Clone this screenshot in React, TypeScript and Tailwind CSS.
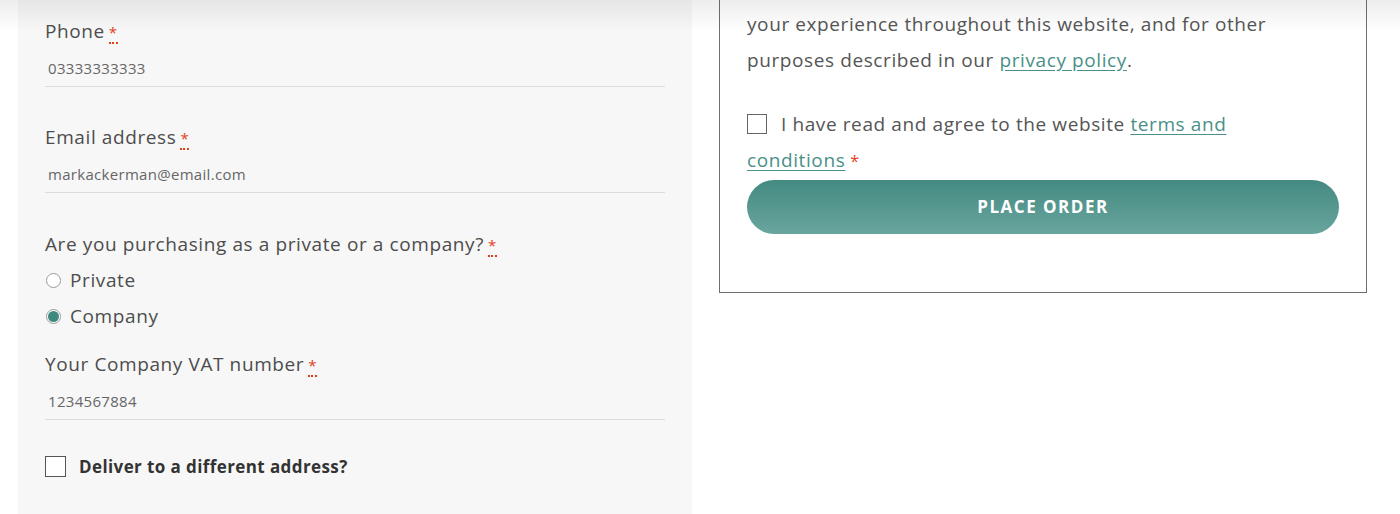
import React from "react";

const font = { fontFamily: '"Open Sans", "Liberation Sans", sans-serif' };

const Req: React.FC = () => (
  <abbr
    title="required"
    className="ml-[4px] text-[15px] text-[#e2401c] no-underline border-b-2 border-dotted border-[#e2401c] leading-none"
  >
    *
  </abbr>
);

interface FieldProps {
  label: string;
  value: string;
}

const Field: React.FC<FieldProps> = ({ label, value }) => (
  <div>
    <label className="block h-[28px] leading-[28px] text-[19px] tracking-[0.6px] text-[#4d4d4d]">
      {label}
      <Req />
    </label>
    <div className="h-[42px] border-b border-[#dcdcdc] pt-[13px] pl-[3px] text-[15px] leading-[20px] tracking-[0.3px] text-[#666]">
      {value}
    </div>
  </div>
);

const Radio: React.FC<{ label: string; checked?: boolean }> = ({ label, checked }) => (
  <div className="flex h-[36px] items-center gap-[9px] pl-[1px]">
    <span className="flex h-[15px] w-[15px] items-center justify-center rounded-full border border-[#9a9a9a] bg-white">
      {checked && <span className="h-[11px] w-[11px] rounded-full bg-[#3e8a81]" />}
    </span>
    <span className="text-[19px] tracking-[0.6px] text-[#4d4d4d]">{label}</span>
  </div>
);

const App: React.FC = () => {
  return (
    <div className="relative flex h-[514px] w-[1400px] overflow-hidden bg-white" style={font}>
      <div className="ml-[18px] w-[674px] bg-[#f7f7f7] px-[27px] pt-[17px]">
        <Field label="Phone" value="03333333333" />
        <div className="mt-[36px]">
          <Field label="Email address" value="markackerman@email.com" />
        </div>
        <div className="mt-[37px] h-[28px] leading-[28px] text-[19px] tracking-[0.6px] text-[#4d4d4d]">
          Are you purchasing as a private or a company?
          <Req />
        </div>
        <div className="mt-[4px]">
          <Radio label="Private" />
          <Radio label="Company" checked />
        </div>
        <div className="mt-[16px]">
          <Field label="Your Company VAT number" value="1234567884" />
        </div>
        <div className="mt-[34px] flex items-center gap-[13px]">
          <span className="h-[21px] w-[21px] border border-[#555] bg-white" />
          <span className="text-[17px] font-bold tracking-[0.4px] text-[#333]">
            Deliver to a different address?
          </span>
        </div>
      </div>

      <div className="ml-[27px] h-[293px] w-[648px] border-x border-b border-[#6f6f6f] px-[27px] pt-[6px]">
        <p className="text-[19px] leading-[36px] tracking-[0.6px] text-[#555]">
          your experience throughout this website, and for other
          <br />
          purposes described in our{" "}
          <a href="#" className="text-[#4a9088] underline underline-offset-[3px]">
            privacy policy
          </a>
          .
        </p>
        <p className="mt-[28px] text-[19px] leading-[36px] tracking-[0.6px] text-[#555]">
          <span className="mr-[14px] inline-block h-[20px] w-[20px] border border-[#666] bg-white align-[-3px]" />
          I have read and agree to the website{" "}
          <a href="#" className="text-[#4a9088] underline underline-offset-[3px]">
            terms and
            <br />
            conditions
          </a>
          <span className="ml-[5px] text-[16px] text-[#e2401c]">*</span>
        </p>
        <button className="mt-px flex h-[54px] w-full items-center justify-center rounded-full bg-gradient-to-b from-[#448a82] to-[#68a59d] text-[17px] font-bold tracking-[1.5px] text-white">
          PLACE ORDER
        </button>
      </div>

      <div className="pointer-events-none absolute inset-x-0 top-0 h-[32px] bg-gradient-to-b from-black/[0.07] to-transparent" />
    </div>
  );
};

export default App;
